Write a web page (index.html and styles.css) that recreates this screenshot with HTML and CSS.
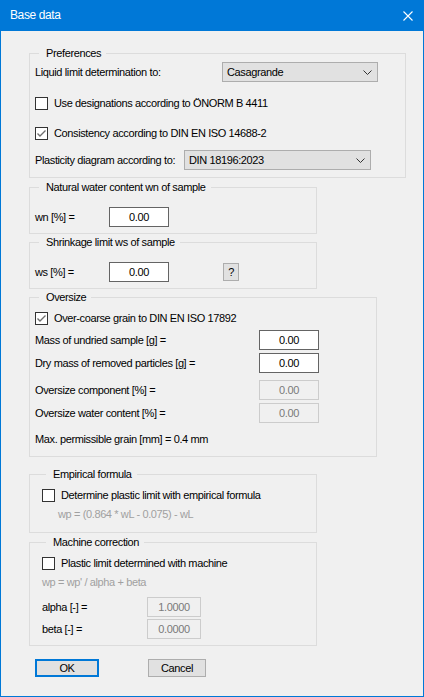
FILE: index.html
```html
<!DOCTYPE html>
<html>
<head>
<meta charset="utf-8">
<title>Base data</title>
<link rel="stylesheet" href="styles.css">
</head>
<body>
<div class="window">
  <div class="titlebar">
    <span class="title">Base data</span>
    <svg class="close" width="10" height="10" viewBox="0 0 10 10"><path d="M0.5 0.5 L9.5 9.5 M9.5 0.5 L0.5 9.5" stroke="#fff" stroke-width="1.1" fill="none"/></svg>
  </div>
  <div class="client">
    <fieldset class="group g-pref">
      <legend>Preferences</legend>
      <div class="row mt2"><span class="lbl" style="width:187px">Liquid limit determination to:</span><div class="combo w156"><span>Casagrande</span><svg class="chev" width="9" height="5" viewBox="0 0 9 5"><path d="M0.5 0.5 L4.5 4.5 L8.5 0.5" stroke="#333" fill="none"/></svg></div></div>
      <div class="row mt11"><span class="cb"></span><span class="cbtext">Use designations according to ÖNORM B 4411</span></div>
      <div class="row mt10"><span class="cb"><svg width="11" height="11" viewBox="0 0 11 11"><path d="M1.5 5.5 L4 8 L9.5 2.5" stroke="#6e6e6e" stroke-width="1.4" fill="none"/></svg></span><span class="cbtext">Consistency according to DIN EN ISO 14688-2</span></div>
      <div class="row mt7"><span class="lbl" style="width:149px">Plasticity diagram according to:</span><div class="combo w186"><span>DIN 18196:2023</span><svg class="chev" width="9" height="5" viewBox="0 0 9 5"><path d="M0.5 0.5 L4.5 4.5 L8.5 0.5" stroke="#333" fill="none"/></svg></div></div>
    </fieldset>

    <fieldset class="group g-small g-nat">
      <legend>Natural water content wn of sample</legend>
      <div class="row mt13"><span class="lbl" style="width:74px">wn [%] =</span><div class="edit w60">0.00</div></div>
    </fieldset>

    <fieldset class="group g-small g-shr">
      <legend>Shrinkage limit ws of sample</legend>
      <div class="row mt13"><span class="lbl" style="width:74px">ws [%] =</span><div class="edit w60">0.00</div><div class="qbtn">?</div></div>
    </fieldset>

    <fieldset class="group g-over">
      <legend>Oversize</legend>
      <div class="row mt4"><span class="cb"><svg width="11" height="11" viewBox="0 0 11 11"><path d="M1.5 5.5 L4 8 L9.5 2.5" stroke="#6e6e6e" stroke-width="1.4" fill="none"/></svg></span><span class="cbtext">Over-coarse grain to DIN EN ISO 17892</span></div>
      <div class="row mt2"><span class="lbl" style="width:224px">Mass of undried sample [g] =</span><div class="edit w60">0.00</div></div>
      <div class="row mt3"><span class="lbl" style="width:224px">Dry mass of removed particles [g] =</span><div class="edit w60">0.00</div></div>
      <div class="row mt7"><span class="lbl" style="width:224px">Oversize component [%] =</span><div class="edit w60 disabled">0.00</div></div>
      <div class="row mt3"><span class="lbl" style="width:224px">Oversize water content [%] =</span><div class="edit w60 disabled">0.00</div></div>
      <div class="row mt6"><span class="lbl">Max. permissible grain [mm] = 0.4 mm</span></div>
    </fieldset>

    <fieldset class="group g-small g-emp">
      <legend>Empirical formula</legend>
      <div class="row mt4"><span class="cb"></span><span class="cbtext">Determine plastic limit with empirical formula</span></div>
      <div class="formula indent">wp = (0.864 * wL - 0.075) - wL</div>
    </fieldset>

    <fieldset class="group g-small g-mach">
      <legend>Machine correction</legend>
      <div class="row mt4"><span class="cb"></span><span class="cbtext">Plastic limit determined with machine</span></div>
      <div class="formula">wp = wp' / alpha + beta</div>
      <div class="row mt8"><span class="lbl" style="width:105px">alpha [-] =</span><div class="edit w54 disabled">1.0000</div></div>
      <div class="row mt2"><span class="lbl" style="width:105px">beta [-] =</span><div class="edit w54 disabled">0.0000</div></div>
    </fieldset>

    <div class="buttons">
      <div class="btn ok">OK</div>
      <div class="btn cancel">Cancel</div>
    </div>
  </div>
</div>
</body>
</html>
```

FILE: styles.css
```css
html, body {
  margin: 0;
  padding: 0;
  background: #f0f0f0;
}
body {
  font-family: "Liberation Sans", Arial, sans-serif;
  font-size: 11px;
  line-height: 13px;
  letter-spacing: -0.38px;
  color: #000;
}
.window {
  width: 424px;
  height: 697px;
  box-sizing: border-box;
  border: 1px solid #0078d7;
  border-top: 0;
  background: #f0f0f0;
  display: flex;
  flex-direction: column;
  overflow: hidden;
}
.titlebar {
  height: 31px;
  flex: none;
  background: #0078d7;
  display: flex;
  align-items: center;
  padding: 0 10px 0 9px;
}
.title {
  color: #fff;
  font-size: 12px;
  letter-spacing: -0.4px;
  line-height: 31px;
}
.close {
  margin-left: auto;
  display: block;
}
.client {
  padding-left: 28px;
  display: flex;
  flex-direction: column;
  align-items: flex-start;
}
.group {
  margin: 0;
  border: 1px solid #dcdcdc;
  padding: 0 0 6px 5px;
  min-width: 0;
  box-sizing: border-box;
  display: flex;
  flex-direction: column;
}
.group legend {
  padding: 0 5px 0 7px;
  margin-left: 4px;
  line-height: 13px;
}
.g-pref { width: 377px; margin-top: 16px; padding-bottom: 7px; }
.g-small { width: 288px; }
.g-nat { margin-top: 3px; }
.g-shr { margin-top: 2px; }
.g-over { width: 348px; margin-top: 2px; padding-bottom: 7px; }
.g-emp { margin-top: 11px; padding-left: 12px; padding-bottom: 11px; }
.g-mach { margin-top: 3px; padding-left: 12px; }

.row {
  height: 20px;
  display: flex;
  align-items: center;
}
.mt2 { margin-top: 2px; }
.mt3 { margin-top: 3px; }
.mt4 { margin-top: 4px; }
.mt6 { margin-top: 6px; }
.mt7 { margin-top: 7px; }
.mt8 { margin-top: 8px; }
.mt10 { margin-top: 10px; }
.mt11 { margin-top: 11px; }
.mt13 { margin-top: 13px; }

.lbl {
  flex: none;
  white-space: nowrap;
}
.combo {
  height: 20px;
  box-sizing: border-box;
  border: 1px solid #adadad;
  background: #e1e1e1;
  display: flex;
  align-items: center;
  padding: 0 5px 0 4px;
}
.combo .chev {
  margin-left: auto;
  display: block;
}
.w156 { width: 156px; }
.w186 { width: 187px; }
.w60 { width: 60px; }
.w54 { width: 54px; }

.cb {
  width: 13px;
  height: 13px;
  box-sizing: border-box;
  border: 1px solid #333;
  background: #fff;
  flex: none;
  display: flex;
}
.cb svg { display: block; }
.cbtext {
  margin-left: 6px;
  white-space: nowrap;
}
.edit {
  height: 20px;
  box-sizing: border-box;
  border: 1px solid #646464;
  background: #fff;
  display: flex;
  align-items: center;
  justify-content: center;
  flex: none;
}
.edit.disabled {
  border-color: #cccccc;
  background: #f0f0f0;
  color: #7a7a7a;
}
.qbtn {
  width: 16px;
  height: 18px;
  box-sizing: border-box;
  border: 1px solid #adadad;
  background: #e1e1e1;
  margin-left: 54px;
  display: flex;
  align-items: center;
  justify-content: center;
}
.formula {
  color: #a0a0a0;
  margin-top: 3px;
  line-height: 13px;
  white-space: nowrap;
}
.formula.indent {
  margin-left: 16px;
}
.buttons {
  display: flex;
  margin-top: 13px;
  padding-left: 6px;
}
.btn {
  height: 18px;
  box-sizing: border-box;
  background: #e1e1e1;
  display: flex;
  align-items: center;
  justify-content: center;
}
.ok {
  width: 64px;
  border: 2px solid #0078d7;
}
.cancel {
  width: 58px;
  margin-left: 49px;
  border: 1px solid #adadad;
}
```
